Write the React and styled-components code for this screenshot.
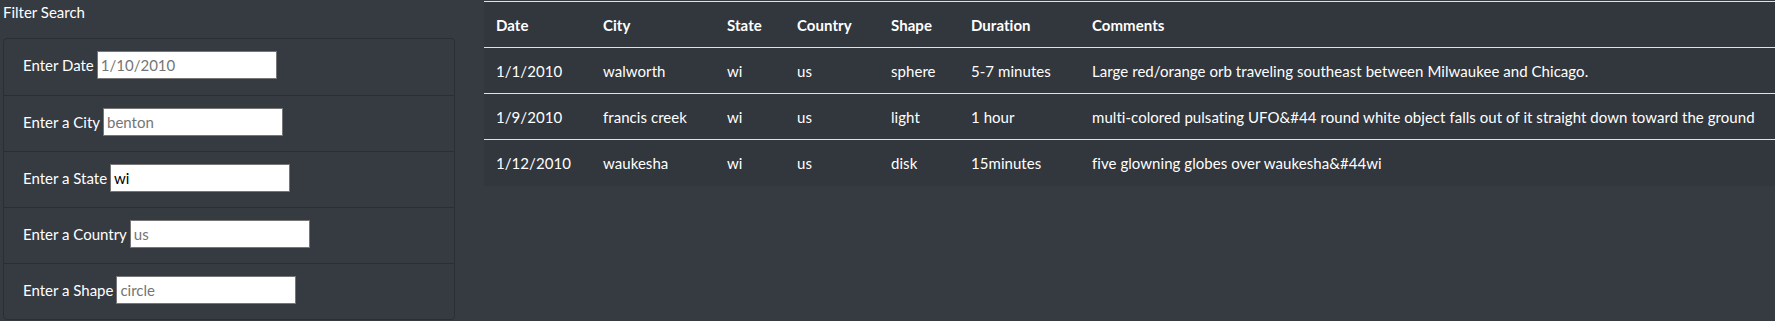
import React from 'react';
import styled, { createGlobalStyle } from 'styled-components';

const GlobalStyle = createGlobalStyle`
  html, body {
    margin: 0;
    padding: 0;
    background-color: #363a41;
  }
  body {
    font-family: "Lato", "Liberation Sans", sans-serif;
    font-size: 15px;
    color: #fff;
  }
`;

const Page = styled.div`
  display: flex;
  align-items: flex-start;
  gap: 29px;
  width: 1775px;
  height: 321px;
  overflow: hidden;
`;

const Sidebar = styled.div`
  flex: 0 0 452px;
  padding-left: 3px;
`;

const SidebarTitle = styled.div`
  height: 38px;
  line-height: 24px;
`;

const FilterList = styled.ul`
  list-style: none;
  margin: 0;
  padding: 0;
  border: 1px solid #2b2f35;
  border-radius: 4px;
`;

const FilterItem = styled.li`
  display: flex;
  align-items: center;
  gap: 3px;
  height: 56px;
  box-sizing: border-box;
  padding: 0 19px 4px;
  border-top: ${props => (props.first ? 'none' : '1px solid #2b2f35')};
`;

const Label = styled.label`
  white-space: nowrap;
`;

const Input = styled.input`
  box-sizing: border-box;
  width: 180px;
  height: 28px;
  padding: 1px 3px;
  border: 1px solid #767676;
  background: #fff;
  color: #000;
  font-family: inherit;
  font-size: 15px;

  &::placeholder {
    color: #757575;
  }
`;

const TableWrap = styled.div`
  flex: 1;
  min-width: 0;
  margin-top: 1px;
`;

const Table = styled.table`
  width: 1292px;
  border-collapse: collapse;
  table-layout: fixed;
  background-color: #32363d;
  letter-spacing: 0.05px;
`;

const Row = styled.tr`
  height: 46px;
  border-top: 1px solid #dee2e6;
`;

const HeadCell = styled.th`
  padding: 0 12px;
  text-align: left;
  font-weight: 700;
  white-space: nowrap;
`;

const Cell = styled.td`
  padding: 0 12px;
  white-space: nowrap;
`;

const columns = [
  { key: 'date', title: 'Date', width: 107 },
  { key: 'city', title: 'City', width: 124 },
  { key: 'state', title: 'State', width: 70 },
  { key: 'country', title: 'Country', width: 94 },
  { key: 'shape', title: 'Shape', width: 80 },
  { key: 'duration', title: 'Duration', width: 121 },
  { key: 'comments', title: 'Comments', width: 696 },
];

const sightings = [
  {
    date: '1/1/2010',
    city: 'walworth',
    state: 'wi',
    country: 'us',
    shape: 'sphere',
    duration: '5-7 minutes',
    comments: 'Large red/orange orb traveling southeast between Milwaukee and Chicago.',
  },
  {
    date: '1/9/2010',
    city: 'francis creek',
    state: 'wi',
    country: 'us',
    shape: 'light',
    duration: '1 hour',
    comments:
      'multi-colored pulsating UFO&#44 round white object falls out of it straight down toward the ground',
  },
  {
    date: '1/12/2010',
    city: 'waukesha',
    state: 'wi',
    country: 'us',
    shape: 'disk',
    duration: '15minutes',
    comments: 'five glowning globes over waukesha&#44wi',
  },
];

const filters = [
  { id: 'datetime', label: 'Enter Date', placeholder: '1/10/2010' },
  { id: 'city', label: 'Enter a City', placeholder: 'benton' },
  { id: 'state', label: 'Enter a State', value: 'wi' },
  { id: 'country', label: 'Enter a Country', placeholder: 'us' },
  { id: 'shape', label: 'Enter a Shape', placeholder: 'circle' },
];

const App = () => {
  return (
    <>
      <GlobalStyle />
      <Page>
        <Sidebar>
          <SidebarTitle>Filter Search</SidebarTitle>
          <FilterList>
            {filters.map((f, i) => (
              <FilterItem key={f.id} first={i === 0}>
                <Label htmlFor={f.id}>{f.label}</Label>
                <Input
                  id={f.id}
                  type="text"
                  placeholder={f.placeholder}
                  defaultValue={f.value}
                />
              </FilterItem>
            ))}
          </FilterList>
        </Sidebar>
        <TableWrap>
          <Table>
            <colgroup>
              {columns.map(c => (
                <col key={c.key} style={{ width: c.width }} />
              ))}
            </colgroup>
            <thead>
              <Row>
                {columns.map(c => (
                  <HeadCell key={c.key}>{c.title}</HeadCell>
                ))}
              </Row>
            </thead>
            <tbody>
              {sightings.map((s, index) => (
                <Row key={index}>
                  {columns.map(c => (
                    <Cell key={c.key}>{s[c.key]}</Cell>
                  ))}
                </Row>
              ))}
            </tbody>
          </Table>
        </TableWrap>
      </Page>
    </>
  );
};

export default App;
